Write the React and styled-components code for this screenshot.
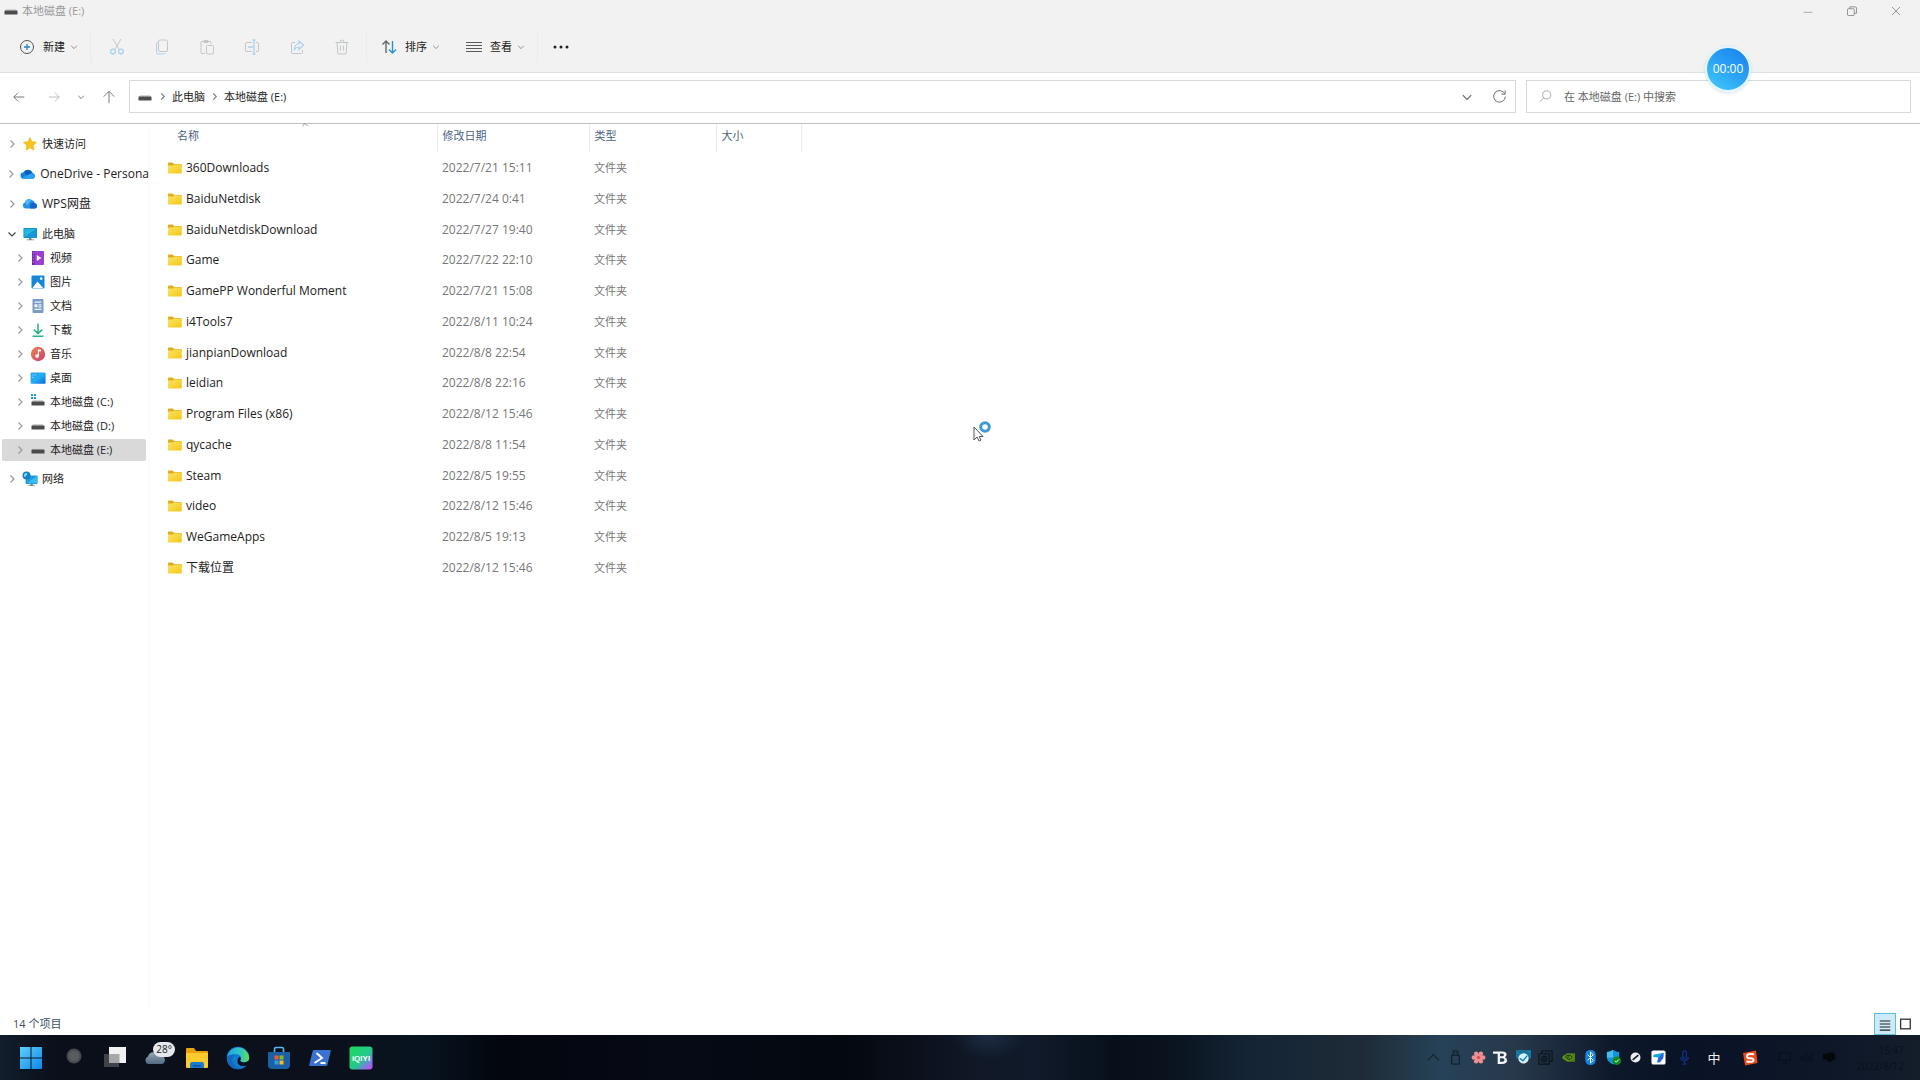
import styled, { createGlobalStyle } from "styled-components";

const files = [
  ["360Downloads", "2022/7/21 15:11"],
  ["BaiduNetdisk", "2022/7/24 0:41"],
  ["BaiduNetdiskDownload", "2022/7/27 19:40"],
  ["Game", "2022/7/22 22:10"],
  ["GamePP Wonderful Moment", "2022/7/21 15:08"],
  ["i4Tools7", "2022/8/11 10:24"],
  ["jianpianDownload", "2022/8/8 22:54"],
  ["leidian", "2022/8/8 22:16"],
  ["Program Files (x86)", "2022/8/12 15:46"],
  ["qycache", "2022/8/8 11:54"],
  ["Steam", "2022/8/5 19:55"],
  ["video", "2022/8/12 15:46"],
  ["WeGameApps", "2022/8/5 19:13"],
  ["下载位置", "2022/8/12 15:46"],
];

const Chevron = ({ dir = "right", size = 10, color = "#8a8a8a", width = 1.2 }) => {
  const paths = {
    right: "M3.5 1.5 7 5 3.5 8.5",
    down: "M1.5 3.5 5 7 8.5 3.5",
    up: "M1.5 6.5 5 3 8.5 6.5",
  };
  return (
    <svg width={size} height={size} viewBox="0 0 10 10" fill="none" stroke={color} strokeWidth={width}>
      <path d={paths[dir]} />
    </svg>
  );
};

const DriveIcon = ({ system }) => (
  <svg width="16" height="16" viewBox="0 0 16 16">
    {system && (
      <path d="M1 0h2v2H1zM4 0h2v2H4zM1 3h2v2H1zM4 3h2v2H4z" fill="#1f95d6" />
    )}
    <path d="M3 6h10l1 2H2z" fill="#d4d4d4" />
    <rect x="1.5" y="7.5" width="13" height="4" rx=".6" fill="#4b4b4b" />
  </svg>
);

const FolderIcon = () => (
  <svg width="14" height="12" viewBox="0 0 14 12">
    <defs>
      <linearGradient id="folder" x1="0" y1="0" x2="1" y2="1">
        <stop offset="0" stopColor="#fce469" />
        <stop offset="1" stopColor="#f3c716" />
      </linearGradient>
    </defs>
    <path d="M0 1.4Q0 .6.8.6h3.8L6.2 2H13q.7 0 .7.8V5H0z" fill="#e0ac1c" />
    <path d="M0 3.6h5l1.4-1.1h6.8q.6 0 .6.7v7.3q0 .9-.9.9H.9q-.9 0-.9-.9z" fill="url(#folder)" />
  </svg>
);

const StarIcon = () => (
  <svg width="16" height="16" viewBox="0 0 16 16">
    <path
      d="m8 1.6 1.9 4.1 4.6.6-3.4 3.1.9 4.6L8 11.8 4 14l.9-4.6-3.4-3.1 4.6-.6z"
      fill="#f7c51e"
      stroke="#eab010"
      strokeWidth=".7"
      strokeLinejoin="round"
    />
  </svg>
);

const OneDriveIcon = () => (
  <svg width="16" height="16" viewBox="0 0 16 16">
    <path d="M4 12.8a3.3 3.3 0 0 1-.4-6.6A5 5 0 0 1 12.6 7 3 3 0 0 1 13 12.8z" fill="#1482dc" />
    <path d="M4 6.2a5 5 0 0 1 8.6.8L7 9.4z" fill="#0a5fb8" />
    <path d="M2 12 11 7.4a3 3 0 0 1 2 5.4H4q-1.3 0-2-.8z" fill="#2ba3f2" />
  </svg>
);

const WpsIcon = () => (
  <svg width="16" height="16" viewBox="0 0 16 16">
    <path d="M4 12.6A3.2 3.2 0 0 1 3 6.4 4 4 0 0 1 9.6 4a4 4 0 0 1 3.3 3.2 2.8 2.8 0 0 1 .3 5.4z" fill="#2492ec" />
    <path d="M8 12.6V9.4a3 3 0 0 1 5-2.2 2.8 2.8 0 0 1 .2 5.4z" fill="#1268c8" />
    <path d="M3 6.4A4 4 0 0 1 9.6 4L5 9.6z" fill="#50b5fb" />
  </svg>
);

const ComputerIcon = () => (
  <svg width="16" height="16" viewBox="0 0 16 16">
    <rect x="1.5" y="2" width="13.5" height="10" rx=".8" fill="#0d78b8" />
    <rect x="2.2" y="2.6" width="12.1" height="8.8" fill="#25b6e4" />
    <path d="M2.2 11.4 14.3 2.6v8.8z" fill="#1696d2" />
    <path d="M7 12h2.5v1.5H12v.8H4.5v-.8H7z" fill="#6f8798" />
  </svg>
);

const VideoIcon = () => (
  <svg width="16" height="16" viewBox="0 0 16 16">
    <rect x="2" y="1" width="12" height="14" rx="1" fill="#9a3fd0" />
    <path d="M2 1h2.4v14H2z" fill="#6f27a8" />
    <path d="M2.7 2.5h1v1h-1zm0 3h1v1h-1zm0 3h1v1h-1zm0 3h1v1h-1z" fill="#d8a8f2" />
    <path d="m6.8 5 4.6 3-4.6 3z" fill="#fff" />
  </svg>
);

const PictureIcon = () => (
  <svg width="16" height="16" viewBox="0 0 16 16">
    <rect x="1.5" y="1.5" width="13" height="13" rx="1" fill="#1686dd" />
    <path d="m2.2 14.3 5.3-6.7 6 6.7z" fill="#fff" />
    <circle cx="11.2" cy="4.6" r="1.3" fill="#fff" />
  </svg>
);

const DocumentIcon = () => (
  <svg width="16" height="16" viewBox="0 0 16 16">
    <rect x="2.5" y="1" width="11" height="14" rx="1" fill="#7a9cc4" />
    <path d="M4.500 3.500h7v1.200h-7zm0 2.700h3v3h-3zm4 0h3v1.200h-3zm0 2h3v1.200h-3zm-4 2.600h7v1.200h-7z" fill="#eef5fc" />
  </svg>
);

const DownloadIcon = () => (
  <svg width="16" height="16" viewBox="0 0 16 16" fill="none" stroke="#29b08c" strokeWidth="1.5">
    <path d="M8 1.5v10M3.8 7.6 8 11.6l4.2-4M2.5 14.2h11" />
  </svg>
);

const MusicIcon = () => (
  <svg width="16" height="16" viewBox="0 0 16 16">
    <defs>
      <linearGradient id="music" x1="0" y1="0" x2="1" y2="1">
        <stop offset="0" stopColor="#f0854c" />
        <stop offset="1" stopColor="#cb3d70" />
      </linearGradient>
    </defs>
    <circle cx="8" cy="8" r="7.2" fill="url(#music)" />
    <path d="M8.4 3.6v6.2" stroke="#fff" strokeWidth="1.1" />
    <path d="M8 3.6h3v1.8H8z" fill="#fff" />
    <circle cx="7.1" cy="10.1" r="1.8" fill="#fff" />
  </svg>
);

const DesktopIcon = () => (
  <svg width="16" height="16" viewBox="0 0 16 16">
    <defs>
      <linearGradient id="desk" x1="0" y1="0" x2="1" y2="1">
        <stop offset="0" stopColor="#1fa5ee" />
        <stop offset=".5" stopColor="#22aef5" />
        <stop offset="1" stopColor="#1266d3" />
      </linearGradient>
    </defs>
    <rect x=".6" y="2.4" width="15" height="11.4" rx="1" fill="url(#desk)" />
    <path d="M2.2 4.4h1.2v1.2H2.2zm2.3 0h1.2v1.2H4.5zm-2.3 2.3h1.2v1.2H2.2z" fill="#9fe0ff" />
  </svg>
);

const NetworkIcon = () => (
  <svg width="16" height="16" viewBox="0 0 16 16">
    <rect x="3.6" y="4.4" width="12" height="8.6" rx=".8" fill="#1e9bd8" />
    <path d="M4.3 12.3 15 5.1v7.2z" fill="#37bdf0" />
    <path d="M8.4 13h2.4v1.3H13v.7H6.4v-.7h2z" fill="#6f8798" />
    <circle cx="4.500" cy="4.500" r="4" fill="#1580c4" />
    <path d="M2 3.200q2-2 3.600-.9L4 5.200 2 6z" fill="#7fd4f5" />
  </svg>
);

const tree = [
  { label: "快速访问", icon: <StarIcon /> },
  { label: "OneDrive - Persona", icon: <OneDriveIcon />, latin: true },
  { label: "WPS网盘", icon: <WpsIcon />, latin: true },
  { label: "此电脑", icon: <ComputerIcon />, open: true },
  { label: "视频", icon: <VideoIcon />, child: true },
  { label: "图片", icon: <PictureIcon />, child: true },
  { label: "文档", icon: <DocumentIcon />, child: true },
  { label: "下载", icon: <DownloadIcon />, child: true },
  { label: "音乐", icon: <MusicIcon />, child: true },
  { label: "桌面", icon: <DesktopIcon />, child: true },
  { label: "本地磁盘 (C:)", icon: <DriveIcon system />, child: true },
  { label: "本地磁盘 (D:)", icon: <DriveIcon />, child: true },
  { label: "本地磁盘 (E:)", icon: <DriveIcon />, child: true, selected: true },
  { label: "网络", icon: <NetworkIcon /> },
];

const Line = ({ size = 16, children, ...rest }) => (
  <svg width={size} height={size} viewBox="0 0 16 16" fill="none" strokeWidth="1" {...rest}>
    {children}
  </svg>
);

const GREY = "#c3c7ca";
const BLUE = "#a9d3ec";

const editTools = [
  {
    name: "剪切",
    icon: (
      <Line>
        <path d="m4 0 6.500 11M12 0 5.500 11" stroke={GREY} />
        <circle cx="4" cy="12.600" r="2.400" stroke={BLUE} strokeWidth="1.300" />
        <circle cx="12" cy="12.600" r="2.400" stroke={BLUE} strokeWidth="1.300" />
      </Line>
    ),
  },
  {
    name: "复制",
    icon: (
      <Line>
        <path d="M4.500 3.500h-1q-1 0-1 1v9q0 1.500 1.500 1.500h6q1 0 1-1" stroke={BLUE} />
        <rect x="4.500" y="1" width="9" height="11.500" rx="1.500" stroke={GREY} />
      </Line>
    ),
  },
  {
    name: "粘贴",
    icon: (
      <Line>
        <path d="M6 14.500H3q-1 0-1-1v-10q0-1 1-1h8q1 0 1 1V5M5 1.500h4v2H5z" stroke={GREY} />
        <rect x="7.500" y="6.500" width="7" height="8.500" rx="1" stroke={GREY} />
      </Line>
    ),
  },
  {
    name: "重命名",
    icon: (
      <Line>
        <path d="M8 3.500H3q-1.500 0-1.500 1.500v6q0 1.500 1.500 1.500h5M12 3.500h1q1.500 0 1.500 1.500v6q0 1.500-1.500 1.500h-1" stroke={GREY} />
        <path d="M10 1v14M8.500 1h3M8.500 15h3M4 8h5" stroke={BLUE} strokeWidth="1.300" />
      </Line>
    ),
  },
  {
    name: "共享",
    icon: (
      <Line>
        <path d="M6 3.500H3.500q-1 0-1 1v9q0 1 1 1h9q1 0 1-1V11" stroke={GREY} />
        <path d="M10 2v2.500Q6 5 5.500 10.500 7.500 8 10 8v2.500l4.500-4.300z" stroke={BLUE} strokeWidth="1.200" />
      </Line>
    ),
  },
  {
    name: "删除",
    icon: (
      <Line>
        <path d="M1.500 3.500h13M3 3.500l1 11.500h8l1-11.500M6 3q0-2 2-2t2 2M6.500 6.500v5M9.500 6.500v5" stroke={GREY} />
      </Line>
    ),
  },
];

const pinned = [
  {
    name: "开始",
    icon: (
      <svg width="24" height="24" viewBox="0 0 24 24">
        <defs>
          <linearGradient id="win" x1="0" y1="0" x2="1" y2="1">
            <stop offset="0" stopColor="#5fd0fb" />
            <stop offset="1" stopColor="#0d86ea" />
          </linearGradient>
        </defs>
        <path d="M1 1h10.500v10.500H1zM12.500 1H23v10.500H12.500zM1 12.500h10.500V23H1zM12.500 12.500H23V23H12.500z" fill="url(#win)" />
      </svg>
    ),
  },
  {
    name: "搜索",
    icon: (
      <svg width="24" height="24" viewBox="0 0 24 24">
        <circle cx="12" cy="10" r="7.500" fill="#47484a" />
        <circle cx="12" cy="10" r="5.500" fill="#5a5b5d" />
      </svg>
    ),
  },
  {
    name: "任务视图",
    icon: (
      <svg width="24" height="24" viewBox="0 0 24 24">
        <path d="M1 8h15v13H1z" fill="#3f4246" />
        <path d="M6 1h17v16H6z" fill="#f1f1f1" />
        <path d="M6 8h10.500v9H6z" fill="#a6a7a8" />
      </svg>
    ),
  },
  {
    name: "天气",
    badge: "28°",
    icon: (
      <svg width="24" height="24" viewBox="0 0 24 24">
        <defs>
          <linearGradient id="cloud" x1="0" y1="0" x2="0" y2="1">
            <stop offset="0" stopColor="#91a5b5" />
            <stop offset="1" stopColor="#526b7e" />
          </linearGradient>
        </defs>
        <path d="M4 18a4 4 0 0 1 0-7.500 5.500 5.500 0 0 1 10.500-.5 4 4 0 0 1 4 8z" fill="url(#cloud)" />
      </svg>
    ),
  },
  {
    name: "文件资源管理器",
    icon: (
      <svg width="24" height="24" viewBox="0 0 24 24">
        <path d="M1 3q0-1 1-1h7l2 3h11q1 0 1 1v5H1z" fill="#e9a20c" />
        <path d="M1 7h22v14q0 1-1 1H2q-1 0-1-1z" fill="#fccb2e" />
        <path d="M5 22v-4q0-2 2-2h10q2 0 2 2v4z" fill="#1b7ad0" />
        <path d="M8 19h8v1.500H8z" fill="#0c559f" />
      </svg>
    ),
  },
  {
    name: "Microsoft Edge",
    icon: (
      <svg width="24" height="24" viewBox="0 0 24 24">
        <defs>
          <linearGradient id="edge" x1="0" y1="0" x2="1" y2="0">
            <stop offset="0" stopColor="#1ba4ea" />
            <stop offset=".6" stopColor="#2fc6c5" />
            <stop offset="1" stopColor="#63de4b" />
          </linearGradient>
        </defs>
        <circle cx="12" cy="12" r="11.200" fill="#127bd3" />
        <path d="M1 11A11.200 11.200 0 0 1 23.200 11.500q0 4.500-5 4.500-4 0-4-2 1.300-1.500.5-3.300Q13.500 8 9.500 8 4 8 1 11z" fill="url(#edge)" />
        <path d="M9 9q-5 4-1.500 9 4 5.500 10.500 3.500Q12 25 6 21.500 0 17 1.200 11 4 8 9 9z" fill="#1268bd" />
        <path d="M13.500 10.500q2.500 2 .5 4 1.500 2.500 5.500 1.700 2.500-.4 4.500-2.700v4q-2 2-4.500 2.300-5 1-7-1.600-2.500-3.500 1-7.700z" fill="#08101c" />
      </svg>
    ),
  },
  {
    name: "Microsoft Store",
    icon: (
      <svg width="24" height="24" viewBox="0 0 24 24">
        <path d="M7.500 6V3q0-1.500 1.500-1.500h6q1.500 0 1.500 1.500v3" fill="none" stroke="#5bb8ea" strokeWidth="1.600" />
        <path d="M1 6h22v13q0 4-4 4H5q-4 0-4-4z" fill="#1b5fa6" />
        <path d="M7.500 9.500h4v4h-4z" fill="#ef5a32" />
        <path d="M12.500 9.500h4v4h-4z" fill="#82bb2b" />
        <path d="M7.500 14.500h4v4h-4z" fill="#25a5e8" />
        <path d="M12.500 14.500h4v4h-4z" fill="#fbbb1c" />
      </svg>
    ),
  },
  {
    name: "PowerShell",
    icon: (
      <svg width="24" height="24" viewBox="0 0 24 24">
        <path d="M6 4h16q1 0 .8 1l-3.500 14q-.3 1-1.300 1H2q-1 0-.8-1L4.700 5Q5 4 6 4z" fill="#3a72cf" />
        <path d="m8.500 7 5.500 5-7.500 5M12.500 17h5" fill="none" stroke="#fff" strokeWidth="1.900" />
      </svg>
    ),
  },
  {
    name: "爱奇艺",
    icon: (
      <svg width="24" height="24" viewBox="0 0 24 24">
        <defs>
          <linearGradient id="iqiyi" x1="0" y1="0" x2="1" y2="1">
            <stop offset="0" stopColor="#20d95a" />
            <stop offset=".55" stopColor="#22c98a" />
            <stop offset=".78" stopColor="#7a7fe0" />
            <stop offset="1" stopColor="#e23bea" />
          </linearGradient>
        </defs>
        <rect x=".5" y=".5" width="23" height="23" rx="3" fill="url(#iqiyi)" />
        <text x="12" y="15" textAnchor="middle" fontFamily="Liberation Sans" fontWeight="700" fontSize="8" fill="#fff">
          iQIYI
        </text>
      </svg>
    ),
  },
];

const tray = [
  ["显示隐藏的图标", <path d="m2 11 6-6 6 6" stroke="#17222c" fill="none" strokeWidth="1.300" />],
  ["USB", <path d="M4 5.500h8V15H4zM5.500 5.500V1h5v4.500M7 3h.8M9 3h.8" stroke="#0d1720" fill="none" />],
  [
    "花瓣",
    <g fill="#ee8f93">
      <circle cx="8" cy="8" r="4" />
      <circle cx="5.500" cy="4" r="2.400" />
      <circle cx="10.500" cy="4" r="2.400" />
      <circle cx="3" cy="8" r="2.400" />
      <circle cx="13" cy="8" r="2.400" />
      <circle cx="5.500" cy="12" r="2.400" />
      <circle cx="10.500" cy="12" r="2.400" />
      <circle cx="8" cy="8" r="1.800" fill="#d9545f" />
    </g>,
  ],
  [
    "TB",
    <path d="M0 1.500h9.500q5 0 5 3.400 0 2-1.800 2.900Q15 8.600 15 11q0 4-5.500 4H5V4H0zm7.500 2.200v3h2q2.200 0 2.200-1.500T9.500 3.700zm0 5.200v3.700H10q2.200 0 2.200-1.900T9.800 8.900z" fill="#f3f5f7" fillRule="evenodd" />,
  ],
  [
    "同步",
    <g>
      <path d="M0 0h16v9H0z" fill="#1a7297" />
      <circle cx="8" cy="9" r="5.500" fill="#d9f1fb" />
      <path d="m4 9 3.500 2.500L12 6M1 2l3 3M13 3l2-2" stroke="#1485b7" fill="none" strokeWidth="1.500" />
    </g>,
  ],
  [
    "录屏",
    <g fill="none" stroke="#0b131c" strokeWidth="1.200">
      <path d="M4 4V1h11v11h-3M1 4h11v11H1z" />
      <circle cx="6.500" cy="9.500" r="3" />
      <circle cx="6.500" cy="9.500" r="1" />
    </g>,
  ],
  [
    "NVIDIA",
    <g>
      <path d="M6 3.500h9v9H6z" fill="#4d7e10" />
      <path d="M1 8q3-4 7-4 3.500 0 6 4-2.500 4-6 4-4 0-7-4z" fill="#5c9613" />
      <path d="M4 8q2-2.500 4.500-2.500T12 8q-1.500 2-3.500 2T6 8.300q1-1.500 3-.8" fill="none" stroke="#17280a" />
    </g>,
  ],
  [
    "蓝牙",
    <g>
      <rect x="2.500" y="0" width="11" height="16" rx="5" fill="#1683e2" />
      <path d="m5 5 6 6-3 2.800V2.200L11 5l-6 6" fill="none" stroke="#fff" />
    </g>,
  ],
  [
    "安全中心",
    <g>
      <path d="M7.500 0Q4 2 1 2v6q0 4.500 6.500 7.500Q14 12.500 14 8V2Q11 2 7.500 0z" fill="#1593d8" />
      <path d="M7.500 0Q4 2 1 2v6h6.500z" fill="#43bdf2" />
      <circle cx="11.500" cy="11.500" r="4.500" fill="#108a1d" />
      <path d="m9.500 11.500 1.500 1.500 2.700-3" stroke="#fff" fill="none" />
    </g>,
  ],
  [
    "助手",
    <g>
      <circle cx="8" cy="8" r="5.300" fill="#eceef0" />
      <path d="m5 10.500 6-5" stroke="#111b2e" strokeWidth="1.800" />
    </g>,
  ],
  [
    "飞书",
    <g>
      <rect x=".5" y=".5" width="15" height="15" rx="2" fill="#fff" />
      <path d="M2.500 5 13.500 3l-.5 5.500L9.500 13H6.500L8 8 2.500 7.500z" fill="#1aa2e2" />
      <path d="m8 8 5.500-5-.5 5.500L9.500 13H6.500z" fill="#2b66d9" />
    </g>,
  ],
];

const systemTray = [
  ["网络", <path d="M1 3h12v8H1zM5 14h6M8 11v3" fill="none" stroke="#09101b" strokeWidth="1.300" />],
  ["音量", <path d="M1 6v4M4 5v7M7 3v10M10 6v7M13 4v9" fill="none" stroke="#09101b" strokeWidth="1.300" />],
  ["电池", <path d="M1 4h5l3-2 5 2v6l-7 3-2-3H1z" fill="#04070c" />],
];

const App = () => (
  <Page>
    <GlobalStyle />
    <TitleBar>
      <WindowTitle>
        <DriveIcon />
        本地磁盘 (E:)
      </WindowTitle>
      <WindowControls>
        <CaptionButton aria-label="最小化">
          <Line size={14} stroke="#a0a0a0">
            <path d="M3 9.500h10" />
          </Line>
        </CaptionButton>
        <CaptionButton aria-label="还原">
          <Line size={12} stroke="#777">
            <rect x="2" y="5" width="9" height="9" rx="1" />
            <path d="M5 5V2.500h7.500q1.500 0 1.500 1.500V11h-3" />
          </Line>
        </CaptionButton>
        <CaptionButton aria-label="关闭">
          <Line size={12} stroke="#777">
            <path d="m2.500 2.500 11 11M13.500 2.500l-11 11" />
          </Line>
        </CaptionButton>
      </WindowControls>
    </TitleBar>

    <Toolbar>
      <MenuButton $space={12}>
        <Line stroke="#555">
          <circle cx="8" cy="8" r="6.500" />
          <path d="M8 5v6M5 8h6" stroke="#1f86c9" strokeWidth="1.300" />
        </Line>
        新建
        <Chevron dir="down" size={8} />
      </MenuButton>
      <Divider />
      <EditTools>
        {editTools.map((tool) => (
          <ToolButton key={tool.name} aria-label={tool.name}>
            {tool.icon}
          </ToolButton>
        ))}
      </EditTools>
      <Divider />
      <MenuButton $space={14}>
        <Line strokeWidth="1.400">
          <path d="M5 14V2M1.500 5.500 5 2l3.500 3.500" stroke="#666" />
          <path d="M11.500 2v12M8 10.500l3.500 3.500 3.500-3.500" stroke="#2a91cf" />
        </Line>
        排序
        <Chevron dir="down" size={8} />
      </MenuButton>
      <MenuButton $space={12}>
        <Line stroke="#5a5a5a">
          <path d="M0 3.500h16M0 6.500h16M0 9.500h16M0 12.500h16" />
        </Line>
        查看
        <Chevron dir="down" size={8} />
      </MenuButton>
      <Divider />
      <ToolButton aria-label="更多">
        <svg width="16" height="16" viewBox="0 0 16 16" fill="#222">
          <circle cx="2" cy="8" r="1.500" />
          <circle cx="8" cy="8" r="1.500" />
          <circle cx="14" cy="8" r="1.500" />
        </svg>
      </ToolButton>
    </Toolbar>

    <NavBar>
      <NavButtons>
        <NavButton aria-label="后退" $width={22}>
          <Line size={14} stroke="#666">
            <path d="M14 8H2M7 3 2 8l5 5" />
          </Line>
        </NavButton>
        <NavButton aria-label="前进" $width={22}>
          <Line size={14} stroke="#b5b5b5">
            <path d="M2 8h12M9 3l5 5-5 5" />
          </Line>
        </NavButton>
        <NavButton aria-label="最近位置" $width={8}>
          <Chevron dir="down" size={8} color="#777" />
        </NavButton>
        <NavButton aria-label="上移" $width={22}>
          <Line size={14} stroke="#666">
            <path d="M8 15V1.500M2 7.500l6-6 6 6" />
          </Line>
        </NavButton>
      </NavButtons>
      <AddressBar>
        <DriveIcon />
        <Chevron size={9} color="#777" />
        <Crumb href="#pc">此电脑</Crumb>
        <Chevron size={9} color="#777" />
        <Crumb href="#e">本地磁盘 (E:)</Crumb>
        <AddressActions>
          <NavButton aria-label="历史记录" $width={22}>
            <Chevron dir="down" size={12} color="#666" width={1} />
          </NavButton>
          <NavButton aria-label="刷新" $width={22}>
            <Line size={15} stroke="#666">
              <path d="M13.500 5A6.200 6.200 0 1 0 14.200 8M14 1.500V5.500H10" />
            </Line>
          </NavButton>
        </AddressActions>
      </AddressBar>
      <SearchBox>
        <Line size={13} stroke="#999">
          <circle cx="9.500" cy="6" r="5" />
          <path d="m6 9.500-5 5" />
        </Line>
        <SearchInput aria-label="搜索" placeholder="在 本地磁盘 (E:) 中搜索" />
      </SearchBox>
    </NavBar>

    <Body>
      <Sidebar>
        {tree.map((item) => (
          <TreeItem key={item.label} $child={item.child} $selected={item.selected}>
            <TreeArrow>
              <Chevron dir={item.open ? "down" : "right"} color={item.open ? "#444" : "#9a9a9a"} />
            </TreeArrow>
            {item.icon}
            <TreeLabel $latin={item.latin}>{item.label}</TreeLabel>
          </TreeItem>
        ))}
      </Sidebar>
      <Content>
        <FileTable>
          <thead>
            <tr>
              <HeadCell $width={287} $indent={27}>
                名称
                <SortMark>
                  <Chevron dir="up" size={8} color="#888" />
                </SortMark>
              </HeadCell>
              <HeadCell $width={152}>修改日期</HeadCell>
              <HeadCell $width={127}>类型</HeadCell>
              <HeadCell $width={85}>大小</HeadCell>
            </tr>
          </thead>
          <tbody>
            {files.map(([name, date]) => (
              <FileRow key={name}>
                <td>
                  <FileName>
                    <FolderIcon />
                    {name}
                  </FileName>
                </td>
                <MetaCell>{date}</MetaCell>
                <MetaCell $cjk>文件夹</MetaCell>
                <MetaCell />
              </FileRow>
            ))}
          </tbody>
        </FileTable>
      </Content>
    </Body>

    <StatusBar>
      14 个项目
      <ViewButtons>
        <ViewButton aria-label="详细信息" $active>
          <Line size={14} stroke="#222">
            <path d="M2 4.500h12M2 8h12M2 11.500h12M2 15h12" strokeWidth="1.200" />
          </Line>
        </ViewButton>
        <ViewButton aria-label="大图标">
          <Line size={14} stroke="#333">
            <rect x="3" y="2.500" width="11" height="11" strokeWidth="1.500" />
          </Line>
        </ViewButton>
      </ViewButtons>
    </StatusBar>

    <Taskbar>
      <Pinned>
        {pinned.map((app, i) => (
          <TaskButton key={app.name} aria-label={app.name} $wide={i === 0}>
            {app.icon}
            {app.badge && <Badge>{app.badge}</Badge>}
          </TaskButton>
        ))}
      </Pinned>
      <Tray>
        <TrayIcons>
          {tray.map(([name, shape]) => (
            <TrayButton key={name} aria-label={name}>
              <svg width="15" height="15" viewBox="0 0 16 16">
                {shape}
              </svg>
            </TrayButton>
          ))}
        </TrayIcons>
        <TrayButton aria-label="麦克风" $width={30}>
          <svg width="15" height="15" viewBox="0 0 16 16" fill="none" stroke="#12307f" strokeWidth="1.400">
            <rect x="6" y="1" width="4" height="8" rx="2" />
            <path d="M4 7.500Q4 11 8 11t4-3.500M8 11v4M6 15h4" />
          </svg>
        </TrayButton>
        <TrayButton aria-label="输入法" $width={30}>
          中
        </TrayButton>
        <TrayButton aria-label="搜狗输入法" $width={42}>
          <svg width="16" height="16" viewBox="0 0 16 16">
            <path d="M1 3 14 .5 15.500 13 3 15.500z" fill="#e84c1b" />
            <path d="M12 4.300Q5 3.300 5 6t3.500 2.200Q12 8.500 11.500 10.500T4.500 11.500" fill="none" stroke="#fff" strokeWidth="2" />
          </svg>
        </TrayButton>
        <SystemGroup>
          {systemTray.map(([name, shape]) => (
            <TrayButton key={name} aria-label={name}>
              <svg width="15" height="15" viewBox="0 0 16 16">
                {shape}
              </svg>
            </TrayButton>
          ))}
        </SystemGroup>
        <Clock>
          <span>15:47</span>
          <span>2022/8/12</span>
        </Clock>
      </Tray>
    </Taskbar>

    <Timer>00:00</Timer>
    <Pointer width="24" height="24" viewBox="0 0 24 24">
      <path d="M2 7v13l3-3 2 4 2-.9L7.200 16.500H11z" fill="#fff" stroke="#444" strokeWidth=".9" />
      <circle cx="13" cy="7" r="4.300" fill="none" stroke="#3d9ad8" strokeWidth="3" />
    </Pointer>
  </Page>
);

const GlobalStyle = createGlobalStyle`
  * {
    box-sizing: border-box;
  }

  body {
    margin: 0;
    font-family: "Open Sans", "Noto Sans CJK SC", sans-serif;
    font-size: 11px;
    line-height: 16px;
    color: #222;
    background: #fff;
  }

  button {
    display: flex;
    align-items: center;
    justify-content: center;
    padding: 0;
    border: 0;
    background: none;
    color: inherit;
    font: inherit;
  }

  svg {
    flex-shrink: 0;
  }
`;

const Page = styled.div`
  position: relative;
  display: flex;
  flex-direction: column;
  min-height: 100vh;
`;

const TitleBar = styled.header`
  display: flex;
  align-items: center;
  justify-content: space-between;
  height: 22px;
  padding: 0 2px 0 3px;
  background: #f2f2f2;
`;

const WindowTitle = styled.div`
  display: flex;
  align-items: center;
  gap: 3px;
  color: #999;
`;

const WindowControls = styled.div`
  display: flex;
`;

const CaptionButton = styled.button`
  width: 44px;
  height: 24px;
`;

const Toolbar = styled.div`
  display: flex;
  align-items: center;
  height: 51px;
  padding-left: 7px;
  background: #f2f2f2;
  border-bottom: 1px solid #e0e0e0;
`;

const MenuButton = styled.button`
  height: 30px;
  padding: 0 ${(props) => props.$space}px;

  & > svg:first-child {
    margin-right: 8px;
  }

  & > svg:last-child {
    margin-left: 5px;
  }
`;

const Divider = styled.span`
  width: 1px;
  height: 30px;
  background: #ebebeb;
`;

const EditTools = styled.div`
  display: flex;
  padding: 0 2px 0 3px;
`;

const ToolButton = styled.button`
  width: 45px;
  height: 30px;
`;

const NavBar = styled.div`
  display: flex;
  align-items: center;
  height: 51px;
  padding: 0 9px 3px 0;
  border-bottom: 1px solid #bfbfbf;
`;

const NavButtons = styled.div`
  display: flex;
  align-items: center;
  justify-content: space-between;
  width: 129px;
  padding: 0 9px 0 8px;
`;

const NavButton = styled.button`
  width: ${(props) => props.$width}px;
  height: 30px;
`;

const AddressBar = styled.div`
  display: flex;
  flex: 1;
  align-items: center;
  gap: 5px;
  height: 33px;
  padding: 0 5px 0 7px;
  border: 1px solid #d9d9d9;
`;

const Crumb = styled.a`
  color: #222;
  text-decoration: none;
`;

const AddressActions = styled.div`
  display: flex;
  gap: 10px;
  margin-left: auto;
`;

const SearchBox = styled.label`
  display: flex;
  align-items: center;
  gap: 12px;
  width: 385px;
  height: 33px;
  margin-left: 10px;
  padding: 0 12px;
  border: 1px solid #d9d9d9;
`;

const SearchInput = styled.input`
  flex: 1;
  min-width: 0;
  padding: 0;
  border: 0;
  outline: 0;
  background: none;
  font: inherit;

  &::placeholder {
    color: #666;
  }
`;

const Body = styled.div`
  display: flex;
  flex: 1;
`;

const Sidebar = styled.nav`
  width: 150px;
  padding: 8px 0 8px 2px;
  border-right: 1px solid #fafafa;
`;

const TreeItem = styled.div`
  display: flex;
  align-items: center;
  gap: 4px;
  height: ${(props) => (props.$selected ? 22 : 24)}px;
  margin: ${(props) => (props.$selected ? "1px 3px 1px 0" : 0)};
  padding-left: ${(props) => (props.$child ? 12 : 4)}px;
  border-radius: 2px;
  background: ${(props) => (props.$selected ? "#d9d9d9" : "none")};

  ${(props) =>
    !props.$child &&
    `
    &:not(:first-child) {
      margin-top: 6px;
    }
  `}
`;

const TreeArrow = styled.span`
  display: flex;
  justify-content: center;
  width: 12px;
`;

const TreeLabel = styled.span`
  white-space: nowrap;
  font-size: ${(props) => (props.$latin ? 12 : 11)}px;
`;

const Content = styled.main`
  flex: 1;
`;

const FileTable = styled.table`
  table-layout: fixed;
  width: 651px;
  border-collapse: collapse;

  td {
    padding: 0;
  }
`;

const HeadCell = styled.th`
  position: relative;
  width: ${(props) => props.$width}px;
  height: 28px;
  padding: 0 0 4px ${(props) => props.$indent || 5}px;
  border-right: 1px solid #ececec;
  color: #4c5f82;
  font-weight: 400;
  text-align: left;
`;

const SortMark = styled.span`
  position: absolute;
  top: -3px;
  left: 151px;
  line-height: 8px;
`;

const FileRow = styled.tr`
  height: 31px;

  &:nth-child(4n) {
    height: 30px;
  }
`;

const FileName = styled.div`
  display: flex;
  align-items: center;
  gap: 4px;
  padding-left: 18px;
  font-size: 12px;
`;

const MetaCell = styled.td`
  && {
    padding-left: 5px;
  }
  color: #777;
  font-size: ${(props) => (props.$cjk ? 11 : 12)}px;
`;

const StatusBar = styled.footer`
  display: flex;
  align-items: center;
  height: 22px;
  padding: 0 6px 0 13px;
  color: #3c4f66;
`;

const ViewButtons = styled.div`
  display: flex;
  margin-left: auto;
`;

const ViewButton = styled.button`
  width: ${(props) => (props.$active ? 22 : 18)}px;
  height: 22px;
  border: ${(props) => (props.$active ? "1px solid #5cc0dc" : 0)};
  background: ${(props) => (props.$active ? "#cdeaf8" : "none")};
`;

const Taskbar = styled.div`
  display: flex;
  align-items: center;
  justify-content: space-between;
  height: 45px;
  padding: 0 16px 0 9px;
  background:
    radial-gradient(ellipse 36px 24px at 51.5% 0, #1c2d45, transparent),
    linear-gradient(
      90deg,
      #121d2d 0,
      #0a0f19 3%,
      #0b111c 18%,
      #07141f 22%,
      #03060e 26%,
      #060a15 35%,
      #04080f 44%,
      #111827 51%,
      #101a2a 54%,
      #07101a 58%,
      #0a131e 61%,
      #142436 65%,
      #1e2b37 71%,
      #264258 75%,
      #27384b 79%,
      #0e182b 84%,
      #0a1326 88%,
      #0d1728 95%,
      #151d2b 100%
    );
`;

const Pinned = styled.div`
  display: flex;
  gap: 1px;
`;

const TaskButton = styled.button`
  position: relative;
  width: ${(props) => (props.$wide ? 44 : 40)}px;
  height: 40px;
`;

const Badge = styled.span`
  position: absolute;
  top: 4px;
  right: 1px;
  padding: 0 3px;
  border-radius: 8px;
  background: #e6e8ee;
  color: #222;
  font-size: 10px;
  line-height: 15px;
`;

const Tray = styled.div`
  display: flex;
  align-items: center;
`;

const TrayIcons = styled.div`
  display: flex;
  justify-content: space-between;
  width: 247px;
`;

const TrayButton = styled.button`
  width: ${(props) => props.$width || 22}px;
  height: 40px;
  color: #f2f2f2;
  font-size: 13px;
`;

const SystemGroup = styled.div`
  display: flex;
  padding: 0 15px 0 3px;
`;

const Clock = styled.div`
  display: flex;
  flex-direction: column;
  align-items: flex-end;
  width: 49px;
  color: #0a101c;
  font-size: 10px;
`;

const Timer = styled.div`
  position: absolute;
  top: 46px;
  right: 169px;
  width: 46px;
  height: 46px;
  border: 2px solid #e4f6ff;
  border-radius: 50%;
  background: linear-gradient(215deg, #1c86ee 10%, #2aa2f6 50%, #45cdf7 100%);
  box-shadow: 0 1px 3px rgba(80, 160, 210, 0.3);
  color: #fff;
  font-size: 12px;
  line-height: 41px;
  text-align: center;
`;

const Pointer = styled.svg`
  position: absolute;
  top: 420px;
  left: 972px;
`;

export default App;
